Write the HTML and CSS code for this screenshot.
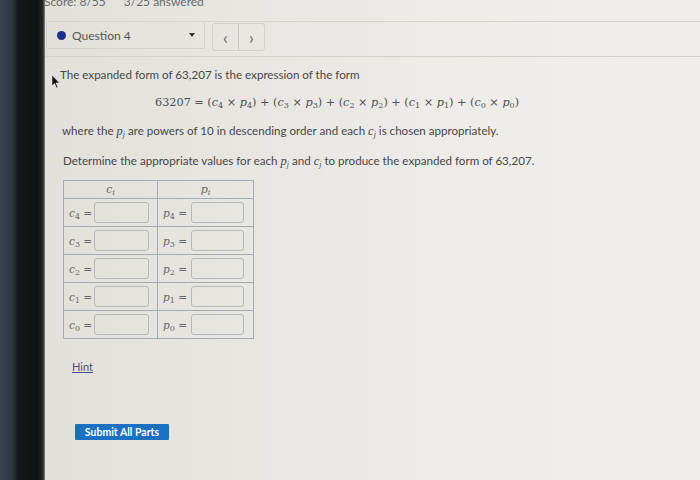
FILE: index.html
```html
<!DOCTYPE html>
<html>
<head>
<meta charset="utf-8">
<link rel="stylesheet" href="styles.css">
</head>
<body>
<div class="bezel"></div>
<div class="screen">
  <div class="topbar"><div class="scores"><span>Score: 8/55</span><span>3/25 answered</span></div></div>
  <div class="qbar">
    <div class="qselect">
      <span class="dot"></span>
      <span class="qlabel">Question 4</span>
      <span class="caret"></span>
    </div>
    <div class="nav">
      <span class="navbtn">&lsaquo;</span>
      <span class="navbtn">&rsaquo;</span>
    </div>
  </div>
  <div class="content">
    <p class="line l1">The expanded form of 63,207 is the expression of the form</p>
    <p class="eq">63207 = (<i>c</i><sub>4</sub> × <i>p</i><sub>4</sub>) + (<i>c</i><sub>3</sub> × <i>p</i><sub>3</sub>) + (<i>c</i><sub>2</sub> × <i>p</i><sub>2</sub>) + (<i>c</i><sub>1</sub> × <i>p</i><sub>1</sub>) + (<i>c</i><sub>0</sub> × <i>p</i><sub>0</sub>)</p>
    <p class="line l2">where the <i>p</i><sub><i>j</i></sub> are powers of 10 in descending order and each <i>c</i><sub><i>j</i></sub> is chosen appropriately.</p>
    <p class="line l3">Determine the appropriate values for each <i>p</i><sub><i>j</i></sub> and <i>c</i><sub><i>j</i></sub> to produce the expanded form of 63,207.</p>
    <table class="grid">
      <tr class="head"><th><i>c</i><sub><i>i</i></sub></th><th><i>p</i><sub><i>i</i></sub></th></tr>
      <tr><td><span class="var"><i>c</i><sub>4</sub> =</span><span class="box"></span></td><td><span class="var"><i>p</i><sub>4</sub> =</span><span class="box"></span></td></tr>
      <tr><td><span class="var"><i>c</i><sub>3</sub> =</span><span class="box"></span></td><td><span class="var"><i>p</i><sub>3</sub> =</span><span class="box"></span></td></tr>
      <tr><td><span class="var"><i>c</i><sub>2</sub> =</span><span class="box"></span></td><td><span class="var"><i>p</i><sub>2</sub> =</span><span class="box"></span></td></tr>
      <tr><td><span class="var"><i>c</i><sub>1</sub> =</span><span class="box"></span></td><td><span class="var"><i>p</i><sub>1</sub> =</span><span class="box"></span></td></tr>
      <tr><td><span class="var"><i>c</i><sub>0</sub> =</span><span class="box"></span></td><td><span class="var"><i>p</i><sub>0</sub> =</span><span class="box"></span></td></tr>
    </table>
    <a class="hint">Hint</a>
    <div class="submit">Submit All Parts</div>
  </div>
  <svg class="cursor" width="10" height="15" viewBox="0 0 10 15"><path d="M1 1 L1 12 L3.5 9.5 L5.5 14 L7 13.3 L5 9 L8.5 9 Z" fill="#111" stroke="#eee" stroke-width="0.6"/></svg>
</div>
</body>
</html>
```
FILE: styles.css
```css
html, body {
  margin: 0;
  padding: 0;
}
body {
  width: 700px;
  height: 480px;
  overflow: hidden;
  display: flex;
  font-family: Lato, "Open Sans", sans-serif;
  color: #4a4a4a;
  background: #e6e4df;
}
sub {
  font-size: 8px;
  line-height: 0;
  vertical-align: -0.3em;
  font-style: normal;
}
.bezel {
  width: 45px;
  flex: none;
  background: linear-gradient(90deg, #3c4453 0px, #2f3541 12px, #16181c 18px, #101114 37px, #26272a 43px, #8c8b86 45px);
}
.screen {
  flex: 1;
  position: relative;
  background: linear-gradient(90deg, #e2e0da 0%, #e9e7e3 35%, #eeedea 70%, #efeeec 100%);
  display: flex;
  flex-direction: column;
}
.topbar {
  height: 21px;
  overflow: hidden;
  border-bottom: 1px solid #d6d4cf;
}
.scores {
  margin-top: -6px;
  font-size: 12px;
  line-height: 15px;
  color: #6a6a6a;
  display: flex;
  gap: 18px;
  margin-left: -1px;
}
.qbar {
  height: 34px;
  border-bottom: 1px solid #d2d0cb;
  display: flex;
  align-items: flex-start;
  gap: 7px;
  padding-left: 1px;
}
.qselect {
  width: 157px;
  height: 26px;
  border: 1px solid #d3d1cb;
  border-top: none;
  border-radius: 0 0 3px 3px;
  display: flex;
  align-items: center;
}
.dot {
  width: 9px;
  height: 9px;
  border-radius: 50%;
  background: #1f2f8c;
  margin-left: 10px;
}
.qlabel {
  font-size: 12px;
  margin-left: 6px;
  color: #575757;
  flex: 1;
}
.caret {
  width: 0;
  height: 0;
  border-left: 3px solid transparent;
  border-right: 3px solid transparent;
  border-top: 4px solid #333;
  margin-right: 9px;
}
.nav {
  display: flex;
  border: 1px solid #d3d1cb;
  border-radius: 3px;
  height: 26px;
  margin-top: 1px;
}
.navbtn {
  width: 25px;
  height: 26px;
  display: flex;
  align-items: center;
  justify-content: center;
  font-size: 17px;
  color: #666;
}
.navbtn + .navbtn {
  border-left: 1px solid #c9c7c2;
}
.content {
  padding-left: 15px;
  display: flex;
  flex-direction: column;
  align-items: flex-start;
}
.line {
  margin: 0;
  font-size: 11.6px;
  line-height: 16px;
  color: #474747;
}
.line i {
  font-family: "Liberation Serif", serif;
  font-size: 12.5px;
}
.line sub i {
  font-size: 8px;
  font-style: italic;
}
.l1 { margin-top: 10px; }
.l2 { margin-top: 10px; margin-left: 2px; }
.l3 { margin-top: 14px; margin-left: 3px; }
.eq {
  margin: 10px 0 0 95px;
  font-family: "DejaVu Serif", serif;
  font-size: 11.25px;
  line-height: 20px;
  color: #505050;
  white-space: nowrap;
}
.eq i, .grid i {
  font-family: "DejaVu Serif", serif;
  font-style: italic;
}
.grid {
  margin: 11px 0 0 3px;
  border-collapse: collapse;
  font-family: "DejaVu Serif", serif;
  color: #666;
}
.grid th, .grid td {
  border: 1px solid #a3abb4;
  padding: 0;
}
.grid th {
  height: 17px;
  font-weight: normal;
  font-size: 11px;
}
.grid th:first-child { width: 93px; }
.grid th:last-child { width: 95px; }
.grid td {
  height: 27px;
}
.grid td .var {
  display: inline-block;
  font-size: 10.5px;
  width: 24px;
  margin-left: 5px;
  vertical-align: middle;
}
.grid td:last-child .var {
  width: 27px;
}
.box {
  display: inline-block;
  vertical-align: middle;
  width: 53px;
  height: 19px;
  border: 1px solid #b5b9bd;
  border-radius: 3px;
  margin-left: 1px;
}
.grid td:last-child .box {
  width: 51px;
}
.hint {
  margin: 20px 0 0 12px;
  font-size: 11px;
  line-height: 16px;
  color: #4b4f86;
  text-decoration: underline;
}
.submit {
  margin: 49px 0 0 15px;
  width: 94px;
  height: 16px;
  background: #1b70c2;
  color: #fff;
  font-size: 10.5px;
  font-weight: bold;
  line-height: 16px;
  text-align: center;
  border-radius: 1px;
}
.cursor {
  position: absolute;
  left: 6px;
  top: 74px;
}
```
